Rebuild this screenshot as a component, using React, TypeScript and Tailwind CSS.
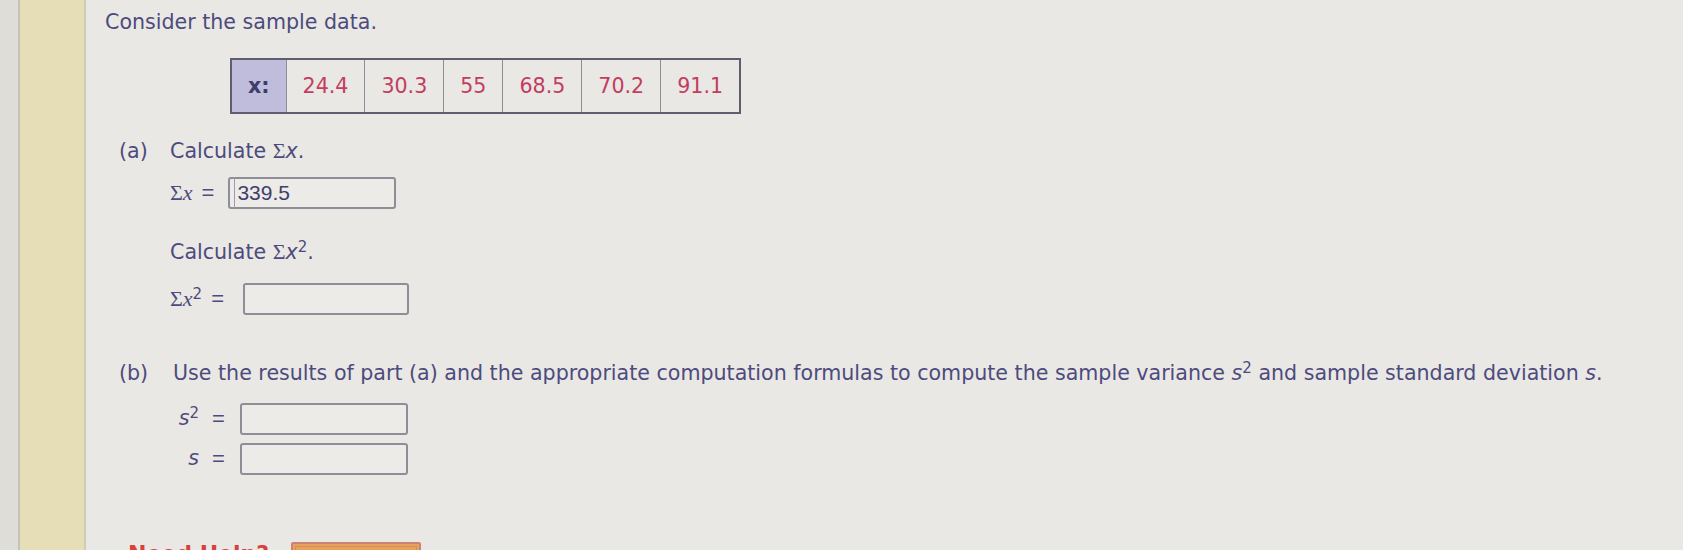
const values = ["24.4", "30.3", "55", "68.5", "70.2", "91.1"];

function Sig() {
  return <span className="font-['Liberation_Serif',serif] text-[22px]">Σ</span>;
}

function AnswerBox({ value, w = "w-[166px]" }: { value?: string; w?: string }) {
  return (
    <div
      className={`${w} h-[32px] rounded-[3px] border-2 border-[#8f8e98] bg-[#ecebe8] px-[4px] flex items-center font-['Liberation_Sans',sans-serif] text-[21px] text-[#3f3e6c]`}
    >
      {value && <span className="border-l border-[#9c9ba6] pl-[2px]">{value}</span>}
    </div>
  );
}

export default function App() {
  return (
    <div className="flex min-h-[620px] w-full bg-[#e9e8e4] font-['DejaVu_Sans',sans-serif] text-[20.6px] text-[#4d4b7d]">
      <div className="w-[20px] shrink-0 bg-[#dfddd7] border-r-2 border-[#c6c3b6]" />
      <div className="w-[66px] shrink-0 bg-[#e6deb6] border-r-2 border-[#d0cbb6]" />

      <main className="flex-1 pl-[19px] pt-[10px]">
        <p className="leading-[24px]">Consider the sample data.</p>

        <table className="ml-[125px] mt-[24px] border-collapse border-2 border-[#5f5e6e]">
          <tbody>
            <tr className="h-[54px]">
              <th className="border border-[#8e8d99] bg-[#bfbddb] px-[16px] font-bold text-[#3f3d6c]">x:</th>
              {values.map((v) => (
                <td key={v} className="border border-[#8e8d99] px-[16px] text-center text-[#c23d5f]">
                  {v}
                </td>
              ))}
            </tr>
          </tbody>
        </table>

        {/* part a */}
        <section className="mt-[25px] flex pl-[14px]">
          <span className="w-[51px] leading-[24px]">(a)</span>
          <div className="flex flex-col">
            <p className="leading-[24px]">
              Calculate <Sig />
              <span className="italic">x</span>.
            </p>
            <div className="mt-[13px] flex items-center">
              <span className="font-['Liberation_Serif',serif]">
                <Sig />
                <span className="italic text-[22px]">x</span>
              </span>
              <span className="ml-[9px] mr-[14px] font-['Liberation_Sans',sans-serif] text-[22px]">=</span>
              <AnswerBox value="339.5" w="w-[168px]" />
            </div>

            <p className="mt-[31px] leading-[24px]">
              Calculate <Sig />
              <span className="italic">x</span>
              <sup className="text-[15px]">2</sup>.
            </p>
            <div className="mt-[18px] flex items-center">
              <span className="font-['Liberation_Serif',serif]">
                <Sig />
                <span className="italic text-[22px]">x</span>
                <sup className="font-['DejaVu_Sans',sans-serif] text-[15px]">2</sup>
              </span>
              <span className="ml-[9px] mr-[19px] font-['Liberation_Sans',sans-serif] text-[22px]">=</span>
              <AnswerBox />
            </div>
          </div>
        </section>

        {/* part b */}
        <section className="mt-[46px] flex pl-[14px]">
          <span className="w-[54px] leading-[24px]">(b)</span>
          <div className="flex flex-col">
            <p className="leading-[24px]">
              Use the results of part (a) and the appropriate computation formulas to compute the sample variance{" "}
              <span className="italic">s</span>
              <sup className="text-[15px]">2</sup> and sample standard deviation <span className="italic">s</span>.
            </p>
            <div className="mt-[17px] grid w-fit grid-cols-[26px_auto_auto] items-center gap-y-[7px]">
              <span className="text-right italic">
                s<sup className="not-italic text-[15px]">2</sup>
              </span>
              <span className="ml-[13px] mr-[15px] font-['Liberation_Sans',sans-serif] text-[22px]">=</span>
              <AnswerBox w="w-[168px]" />
              <span className="text-right italic">s</span>
              <span className="ml-[13px] mr-[15px] font-['Liberation_Sans',sans-serif] text-[22px]">=</span>
              <AnswerBox w="w-[168px]" />
            </div>
          </div>
        </section>

        <div className="mt-[67px] ml-[23px] flex items-start">
          <span className="w-[163px] shrink-0 text-[22px] font-bold leading-[24px] text-[#d8413a]">Need Help?</span>
          <div className="h-[34px] w-[130px] rounded-[2px] border-2 border-[#c98474] bg-[#e9a25e] p-[2px]">
            <div className="h-full w-full border border-[#d98e4e]" />
          </div>
        </div>
      </main>
    </div>
  );
}
